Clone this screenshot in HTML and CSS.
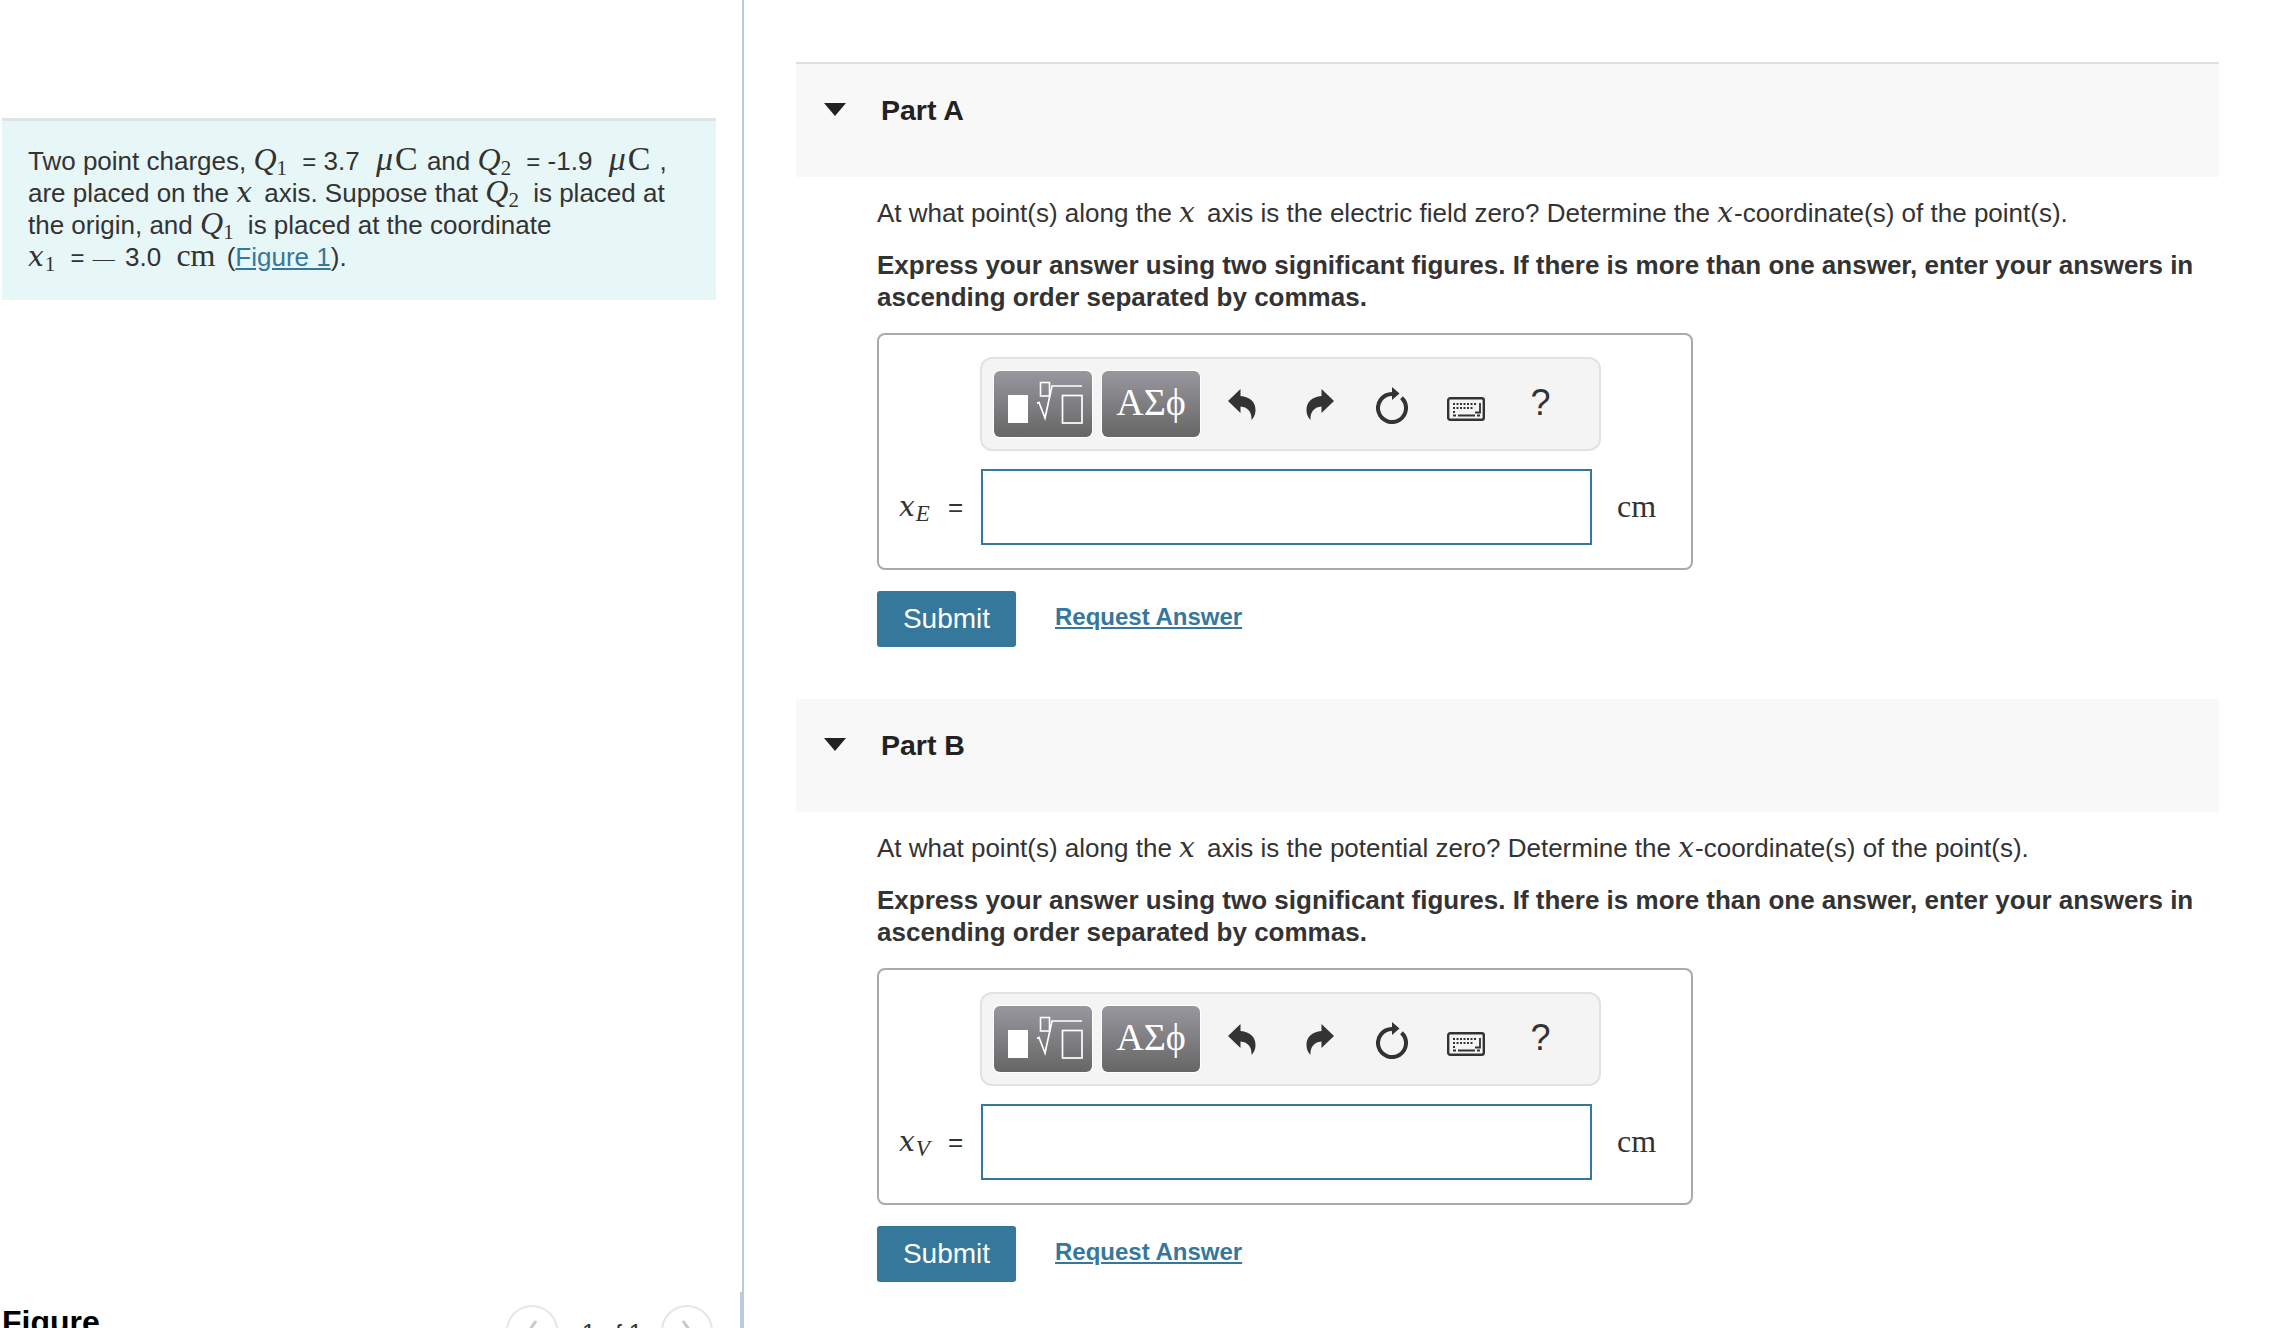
FILE: index.html
```html
<!DOCTYPE html>
<html lang="en">
<head>
<meta charset="utf-8">
<title>Part A and Part B</title>
<link rel="stylesheet" href="styles.css">
</head>
<body>
<svg class="defs" width="0" height="0" aria-hidden="true">
  <symbol id="i-templates" viewBox="0 0 98 66">
    <rect x="14" y="24" width="20" height="28" fill="#fff"/>
    <rect x="46.500" y="11.500" width="9" height="13.500" fill="none" stroke="#fff" stroke-width="1.600"/>
    <path d="M43 32.500l2-1 6 15.500 7-32h30" fill="none" stroke="#fff" stroke-width="1.700"/>
    <rect x="68.500" y="24.500" width="19.500" height="27.500" fill="none" stroke="#fff" stroke-width="1.700"/>
  </symbol>
  <symbol id="i-undo" viewBox="0 0 28 31">
    <path d="M0 12L12.500 0v7C22 8 28 13 27.500 22c-.2 4-2 7-4 9 .5-7-3-13-11-13.500V24Z" fill="#333"/>
  </symbol>
  <symbol id="i-redo" viewBox="0 0 28 31">
    <path d="M28 12L15.500 0v7C6 8 0 13 .5 22c.2 4 2 7 4 9-.5-7 3-13 11-13.500V24Z" fill="#333"/>
  </symbol>
  <symbol id="i-reset" viewBox="0 0 32 37">
    <path d="M16 7A14 14 0 1 0 25.500 10.700" fill="none" stroke="#333" stroke-width="4"/>
    <path d="M16 0l7.500 6.500L16 13Z" fill="#333"/>
  </symbol>
  <symbol id="i-keys" viewBox="0 0 38 24">
    <rect x="1.200" y="1.200" width="35.600" height="21.600" rx="2" fill="none" stroke="#333" stroke-width="2.400"/>
    <path d="M6 7h24M6 11h20M6 15h3" fill="none" stroke="#333" stroke-width="2" stroke-dasharray="2 1.500"/>
    <path d="M33 6v9.500h-5M6 18.500h3M11 18.500h17M30 18.500h3" fill="none" stroke="#333" stroke-width="1.800"/>
  </symbol>
</svg>

<div class="page">
  <aside class="left">
    <div class="intro">
      <p>Two point charges, <span class="q">Q</span><sub class="s">1</sub> <span class="eq">=</span> 3.7 <span class="u"><i>μ</i>C</span> and <span class="q">Q</span><sub class="s">2</sub> <span class="eq">=</span> -1.9 <span class="u"><i>μ</i>C</span> ,<br>
      are placed on the <span class="m">x</span> axis. Suppose that <span class="q">Q</span><sub class="s">2</sub> is placed at<br>
      the origin, and <span class="q">Q</span><sub class="s">1</sub> is placed at the coordinate<br>
      <span class="m nm">x</span><sub class="s">1</sub> <span class="eq">=</span> <span class="minus">—</span> 3.0 <span class="cm">cm</span> (<a href="#">Figure 1</a>).</p>
    </div>
    <div class="figure-bar">
      <h2>Figure</h2>
      <div class="pager">
        <span class="circle"><svg viewBox="0 0 52 52" width="52" height="52"><path d="M30 16L20 30" fill="none" stroke="#c8c8c8" stroke-width="3"/></svg></span>
        <span class="pageno">1 of 1</span>
        <span class="circle"><svg viewBox="0 0 52 52" width="52" height="52"><path d="M22 16L32 30" fill="none" stroke="#c8c8c8" stroke-width="3"/></svg></span>
      </div>
    </div>
  </aside>

  <main class="right">
    <section class="part first">
      <header class="part-head"><span class="tri"></span><h3>Part A</h3></header>
      <div class="part-body">
        <p class="q-text">At what point(s) along the <span class="m">x</span> axis is the electric field zero? Determine the <span class="m nm">x</span>-coordinate(s) of the point(s).</p>
        <p class="instr">Express your answer using two significant figures. If there is more than one answer, enter your answers in ascending order separated by commas.</p>
        <div class="answer">
          <div class="toolbar">
            <span class="tbtn"><svg width="98" height="66"><use href="#i-templates"/></svg></span>
            <span class="tbtn greek">ΑΣϕ</span>
            <span class="slot"><svg width="28" height="31"><use href="#i-undo"/></svg></span>
            <span class="slot redo"><svg width="28" height="31"><use href="#i-redo"/></svg></span>
            <span class="slot reset"><svg width="32" height="37"><use href="#i-reset"/></svg></span>
            <span class="slot kb"><svg width="38" height="24"><use href="#i-keys"/></svg></span>
            <span class="slot help">?</span>
          </div>
          <div class="entry">
            <label class="lab"><span class="m nm">x</span><sub class="s it">E</sub> <span class="eq">=</span></label>
            <div class="field"></div>
            <span class="unit">cm</span>
          </div>
        </div>
        <div class="actions"><button class="submit" type="button">Submit</button><a class="req" href="#">Request Answer</a></div>
      </div>
    </section>

    <section class="part">
      <header class="part-head"><span class="tri"></span><h3>Part B</h3></header>
      <div class="part-body">
        <p class="q-text">At what point(s) along the <span class="m">x</span> axis is the potential zero? Determine the <span class="m nm">x</span>-coordinate(s) of the point(s).</p>
        <p class="instr">Express your answer using two significant figures. If there is more than one answer, enter your answers in ascending order separated by commas.</p>
        <div class="answer">
          <div class="toolbar">
            <span class="tbtn"><svg width="98" height="66"><use href="#i-templates"/></svg></span>
            <span class="tbtn greek">ΑΣϕ</span>
            <span class="slot"><svg width="28" height="31"><use href="#i-undo"/></svg></span>
            <span class="slot redo"><svg width="28" height="31"><use href="#i-redo"/></svg></span>
            <span class="slot reset"><svg width="32" height="37"><use href="#i-reset"/></svg></span>
            <span class="slot kb"><svg width="38" height="24"><use href="#i-keys"/></svg></span>
            <span class="slot help">?</span>
          </div>
          <div class="entry">
            <label class="lab"><span class="m nm">x</span><sub class="s it">V</sub> <span class="eq">=</span></label>
            <div class="field"></div>
            <span class="unit">cm</span>
          </div>
        </div>
        <div class="actions"><button class="submit" type="button">Submit</button><a class="req" href="#">Request Answer</a></div>
      </div>
    </section>
  </main>
</div>
</body>
</html>
```

FILE: styles.css
```css
* { box-sizing: border-box; }
html, body { margin: 0; padding: 0; background: #fff; }
body {
  height: 1328px;
  overflow: hidden;
  font-family: "Liberation Sans", Arial, sans-serif;
  font-size: 26px;
  line-height: 32px;
  color: #333;
}
.defs { display: block; width: 0; height: 0; }
.page { display: flex; height: 1328px; overflow: hidden; }

.left {
  position: relative;
  flex: 0 0 744px;
  height: 1328px;
  overflow: hidden;
  border-right: 2px solid #bdcadb;
  padding: 118px 26px 0 2px;
}
.left::after {
  content: "";
  position: absolute;
  right: 0;
  bottom: 0;
  width: 2px;
  height: 36px;
  background: #bdcadb;
}
.intro {
  height: 182px;
  background: #e7f6f6;
  border-top: 3px solid #dde5e5;
  padding: 24px 10px 0 26px;
}
.intro p { margin: 0; white-space: nowrap; }
.intro a, .req { color: #36789b; text-decoration: underline; }

.m { font-family: "DejaVu Serif", serif; font-style: italic; font-size: 28px; letter-spacing: 1px; line-height: 0; margin-right: 4px; }
.nm { margin-right: 0; }
.q { font-family: "Liberation Serif", serif; font-style: italic; font-size: 32px; line-height: 0; }
.u { font-family: "Liberation Serif", serif; font-size: 34px; line-height: 0; letter-spacing: 2px; margin: 0 0 0 9px; }
.cm { font-family: "Liberation Serif", serif; font-size: 32px; line-height: 0; margin: 0 4px 0 8px; }
.s { font-family: "Liberation Serif", serif; font-size: 21px; line-height: 0; vertical-align: -5px; margin-right: 7px; }
.it { font-style: italic; font-size: 23px; }
.eq { font-size: 24px; line-height: 0; margin-left: 1px; }
.minus { font-family: "Liberation Serif", serif; font-size: 22px; line-height: 0; margin: 0 3px 0 1px; }

.figure-bar { display: flex; justify-content: space-between; margin: 1005px 3px 0 0; }
.figure-bar h2 { margin: 0; color: #000; font-size: 32px; line-height: 34px; font-weight: 700; }
.pager { display: flex; align-items: flex-start; gap: 24px; }
.circle { width: 52px; height: 52px; border: 2px solid #e6e6e6; border-radius: 50%; display: block; }
.circle svg { display: block; margin: -2px; }
.pageno { font-size: 24px; line-height: 32px; padding-top: 12px; width: 55px; white-space: nowrap; }

.right { flex: 1; padding: 62px 51px 0 52px; min-width: 0; }
.part { margin-top: 52px; }
.part.first { margin-top: 0; }
.part-head {
  height: 113px;
  background: #f8f8f8;
  display: flex;
  align-items: flex-start;
  padding: 30px 0 0 28px;
}
.first .part-head { height: 115px; border-top: 2px solid #e0e0e0; }
.tri {
  width: 0; height: 0;
  margin-top: 9px;
  border-left: 11px solid transparent;
  border-right: 11px solid transparent;
  border-top: 13px solid #222;
}
.part-head h3 { margin: 0 0 0 35px; font-size: 28.500px; line-height: 32px; font-weight: 700; color: #222; }

.part-body { padding-left: 81px; }
.q-text { margin: 20px 0 20px; }
.instr { margin: 0 0 20px; font-weight: 700; }

.answer {
  width: 816px;
  height: 237px;
  border: 2px solid #aaa;
  border-radius: 8px;
  padding: 22px 0 0 101px;
}
.toolbar {
  width: 621px;
  height: 94px;
  background: #f4f4f4;
  border: 2px solid #e2e2e2;
  border-radius: 12px;
  display: flex;
  align-items: center;
  padding-left: 12px;
}
.tbtn {
  flex: 0 0 98px;
  height: 66px;
  margin-right: 10px;
  border-radius: 6px;
  background: linear-gradient(#98979e, #666);
  box-shadow: 0 0 0 1px #fff;
  display: flex;
  align-items: center;
  justify-content: center;
}
.tbtn svg { display: block; }
.greek { font-family: "Liberation Serif", serif; color: #fff; font-size: 38px; margin-right: 4px; padding-bottom: 4px; }
.slot { flex: 0 0 75px; display: flex; justify-content: center; align-items: center; height: 66px; }
.slot svg { display: block; }
.redo { padding-left: 6px; }
.reset { padding-top: 3px; }
.kb { padding-top: 10px; padding-right: 2px; }
.help { font-size: 36px; padding: 0 2px 2px 0; }

.entry { display: flex; align-items: center; margin-top: 18px; }
.lab {
  flex: 0 0 82px;
  margin-left: -81px;
  white-space: nowrap;
}
.lab .eq { margin-left: 4px; font-size: 26px; }
.field { flex: 0 0 611px; height: 76px; border: 2px solid #36789b; background: #fff; }
.unit { font-family: "Liberation Serif", serif; font-size: 32px; margin-left: 25px; padding-bottom: 3px; }

.actions { display: flex; align-items: flex-start; margin-top: 21px; }
.submit {
  width: 139px; height: 56px;
  background: #36789b;
  color: #fff;
  border: 0;
  border-radius: 3px;
  font-family: "Liberation Sans", Arial, sans-serif;
  font-size: 28px;
  padding: 0;
}
.req { margin-left: 39px; margin-top: 10px; font-size: 24px; font-weight: 700; }
```
